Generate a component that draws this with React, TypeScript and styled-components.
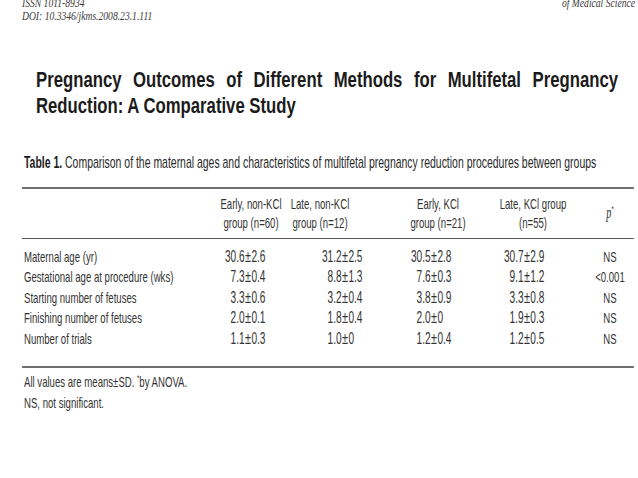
import styled, { createGlobalStyle } from 'styled-components'

// the printed page uses a condensed Helvetica; we squeeze Liberation Sans horizontally
const TABLE_S = 0.64
const u = (px: number, s = TABLE_S) => `${(px / s).toFixed(2)}px`

const GlobalStyle = createGlobalStyle`
  html, body {
    margin: 0;
    padding: 0;
    background: #fff;
    overflow: hidden;
  }
  body {
    font-family: 'Liberation Sans', Arial, sans-serif;
  }
`

const Page = styled.div`
  width: 638px;
  height: 478px;
  overflow: hidden;
  background: #fff;
  display: flex;
  flex-direction: column;
`

const Squeeze = styled.div<{ $s: number; $w: number }>`
  width: ${({ $s, $w }) => $w / $s}px;
  transform: scaleX(${({ $s }) => $s});
  transform-origin: left top;
  flex: none;
`

const JournalBar = styled(Squeeze)`
  margin: -3px 0 0 22px;
  display: flex;
  justify-content: space-between;
  align-items: flex-start;
  font-family: 'Liberation Serif', 'Times New Roman', serif;
  font-style: italic;
  font-size: 12px;
  line-height: 13.4px;
  color: #3a3a3a;
`

const Title = styled(Squeeze)`
  margin: 43.2px 0 0 36px;
  font-size: 22px;
  line-height: 26px;
  font-weight: 700;
  color: #1b1b1b;
  text-align: justify;
  text-align-last: left;
`

const Caption = styled(Squeeze)`
  margin: 33px 0 0 24px;
  font-size: 17px;
  line-height: 21px;
  color: #2a2a2a;
  white-space: nowrap;

  b {
    font-weight: 700;
    color: #1b1b1b;
  }
`

const Table = styled(Squeeze)`
  margin: 14px 0 0 22px;
  border-top: 2px solid #707070;
  border-bottom: 2px solid #707070;
  font-size: 15px;
  color: #333;
`

const Row = styled.div`
  display: grid;
  grid-template-columns: ${u(195)} ${u(68)} ${u(70)} ${u(28)} ${u(110)} ${u(80)} ${u(13)} ${u(48)};
  grid-template-areas: 'lab c1 c2 . c3 c4 . p';
  line-height: 20.5px;
  white-space: nowrap;
`

const HeadRow = styled(Row)`
  padding: 4.5px 0 6.5px;
  line-height: 19px;
  border-bottom: 1px solid #555;
`

const Body = styled.div`
  padding: 7.5px 0 17px;
`

const HeadCell = styled.div<{ $area: string }>`
  grid-area: ${({ $area }) => $area};
  display: flex;
  flex-direction: column;
  align-items: center;
  justify-content: center;
`

const Label = styled.div`
  grid-area: lab;
  padding-left: ${u(2)};
`

const Val = styled.div<{ $area: string; $lead: number }>`
  grid-area: ${({ $area }) => $area};
  display: grid;
  grid-template-columns: ${({ $lead }) => u($lead)} auto auto;
  justify-content: start;
  font-size: 15.8px;
`

const Mean = styled.span`
  text-align: right;
`

const PlusMinus = styled.span`
  font-size: 17px;
  padding: 0 ${u(0.4)};
`

const PCell = styled.div`
  grid-area: p;
  text-align: center;
`

const Italic = styled.i`
  font-family: 'Liberation Serif', 'Times New Roman', serif;
  font-size: 16px;
`

const Sup = styled.sup`
  font-size: 9px;
  line-height: 0;
  vertical-align: 6px;
`

const Footnote = styled(Squeeze)`
  margin: 2.5px 0 0 24px;
  font-size: 15px;
  line-height: 21px;
  color: #333;
`

const groups = [
  { area: 'c1', head: ['Early, non-KCl', 'group (n=60)'], lead: 27.6 },
  { area: 'c2', head: ['Late, non-KCl', 'group (n=12)'], lead: 56.6 },
  { area: 'c3', head: ['Early, KCl', 'group (n=21)'], lead: 47.6 },
  { area: 'c4', head: ['Late, KCl group', '(n=55)'], lead: 30.6 },
]

const rows = [
  { label: 'Maternal age (yr)', vals: ['30.6±2.6', '31.2±2.5', '30.5±2.8', '30.7±2.9'], p: 'NS' },
  { label: 'Gestational age at procedure (wks)', vals: ['7.3±0.4', '8.8±1.3', '7.6±0.3', '9.1±1.2'], p: '<0.001' },
  { label: 'Starting number of fetuses', vals: ['3.3±0.6', '3.2±0.4', '3.8±0.9', '3.3±0.8'], p: 'NS' },
  { label: 'Finishing number of fetuses', vals: ['2.0±0.1', '1.8±0.4', '2.0±0', '1.9±0.3'], p: 'NS' },
  { label: 'Number of trials', vals: ['1.1±0.3', '1.0±0', '1.2±0.4', '1.2±0.5'], p: 'NS' },
]

export default function App() {
  return (
    <Page>
      <GlobalStyle />
      <JournalBar $s={0.8} $w={613}>
        <div>
          <div>ISSN 1011-8934</div>
          <div>DOI: 10.3346/jkms.2008.23.1.111</div>
        </div>
        <div>of Medical Science</div>
      </JournalBar>

      <Title $s={0.76} $w={582}>
        Pregnancy Outcomes of Different Methods for Multifetal Pregnancy Reduction: A Comparative Study
      </Title>

      <Caption $s={0.615} $w={612}>
        <b>Table 1.</b> Comparison of the maternal ages and characteristics of multifetal pregnancy
        reduction procedures between groups
      </Caption>

      <Table $s={TABLE_S} $w={612}>
        <HeadRow>
          <Label />
          {groups.map((g) => (
            <HeadCell key={g.area} $area={g.area}>
              <span>{g.head[0]}</span>
              <span>{g.head[1]}</span>
            </HeadCell>
          ))}
          <HeadCell $area="p">
            <span>
              <Italic>p</Italic>
              <Sup>*</Sup>
            </span>
          </HeadCell>
        </HeadRow>
        <Body>
          {rows.map((r) => (
            <Row key={r.label}>
              <Label>{r.label}</Label>
              {r.vals.map((v, i) => {
                const [mean, sd] = v.split('±')
                return (
                  <Val key={i} $area={groups[i].area} $lead={groups[i].lead}>
                    <Mean>{mean}</Mean>
                    <PlusMinus>±</PlusMinus>
                    <span>{sd}</span>
                  </Val>
                )
              })}
              <PCell>{r.p}</PCell>
            </Row>
          ))}
        </Body>
      </Table>

      <Footnote $s={TABLE_S} $w={400}>
        <div>
          All values are means±SD. <Sup>*</Sup>by ANOVA.
        </div>
        <div>NS, not significant.</div>
      </Footnote>
    </Page>
  )
}
